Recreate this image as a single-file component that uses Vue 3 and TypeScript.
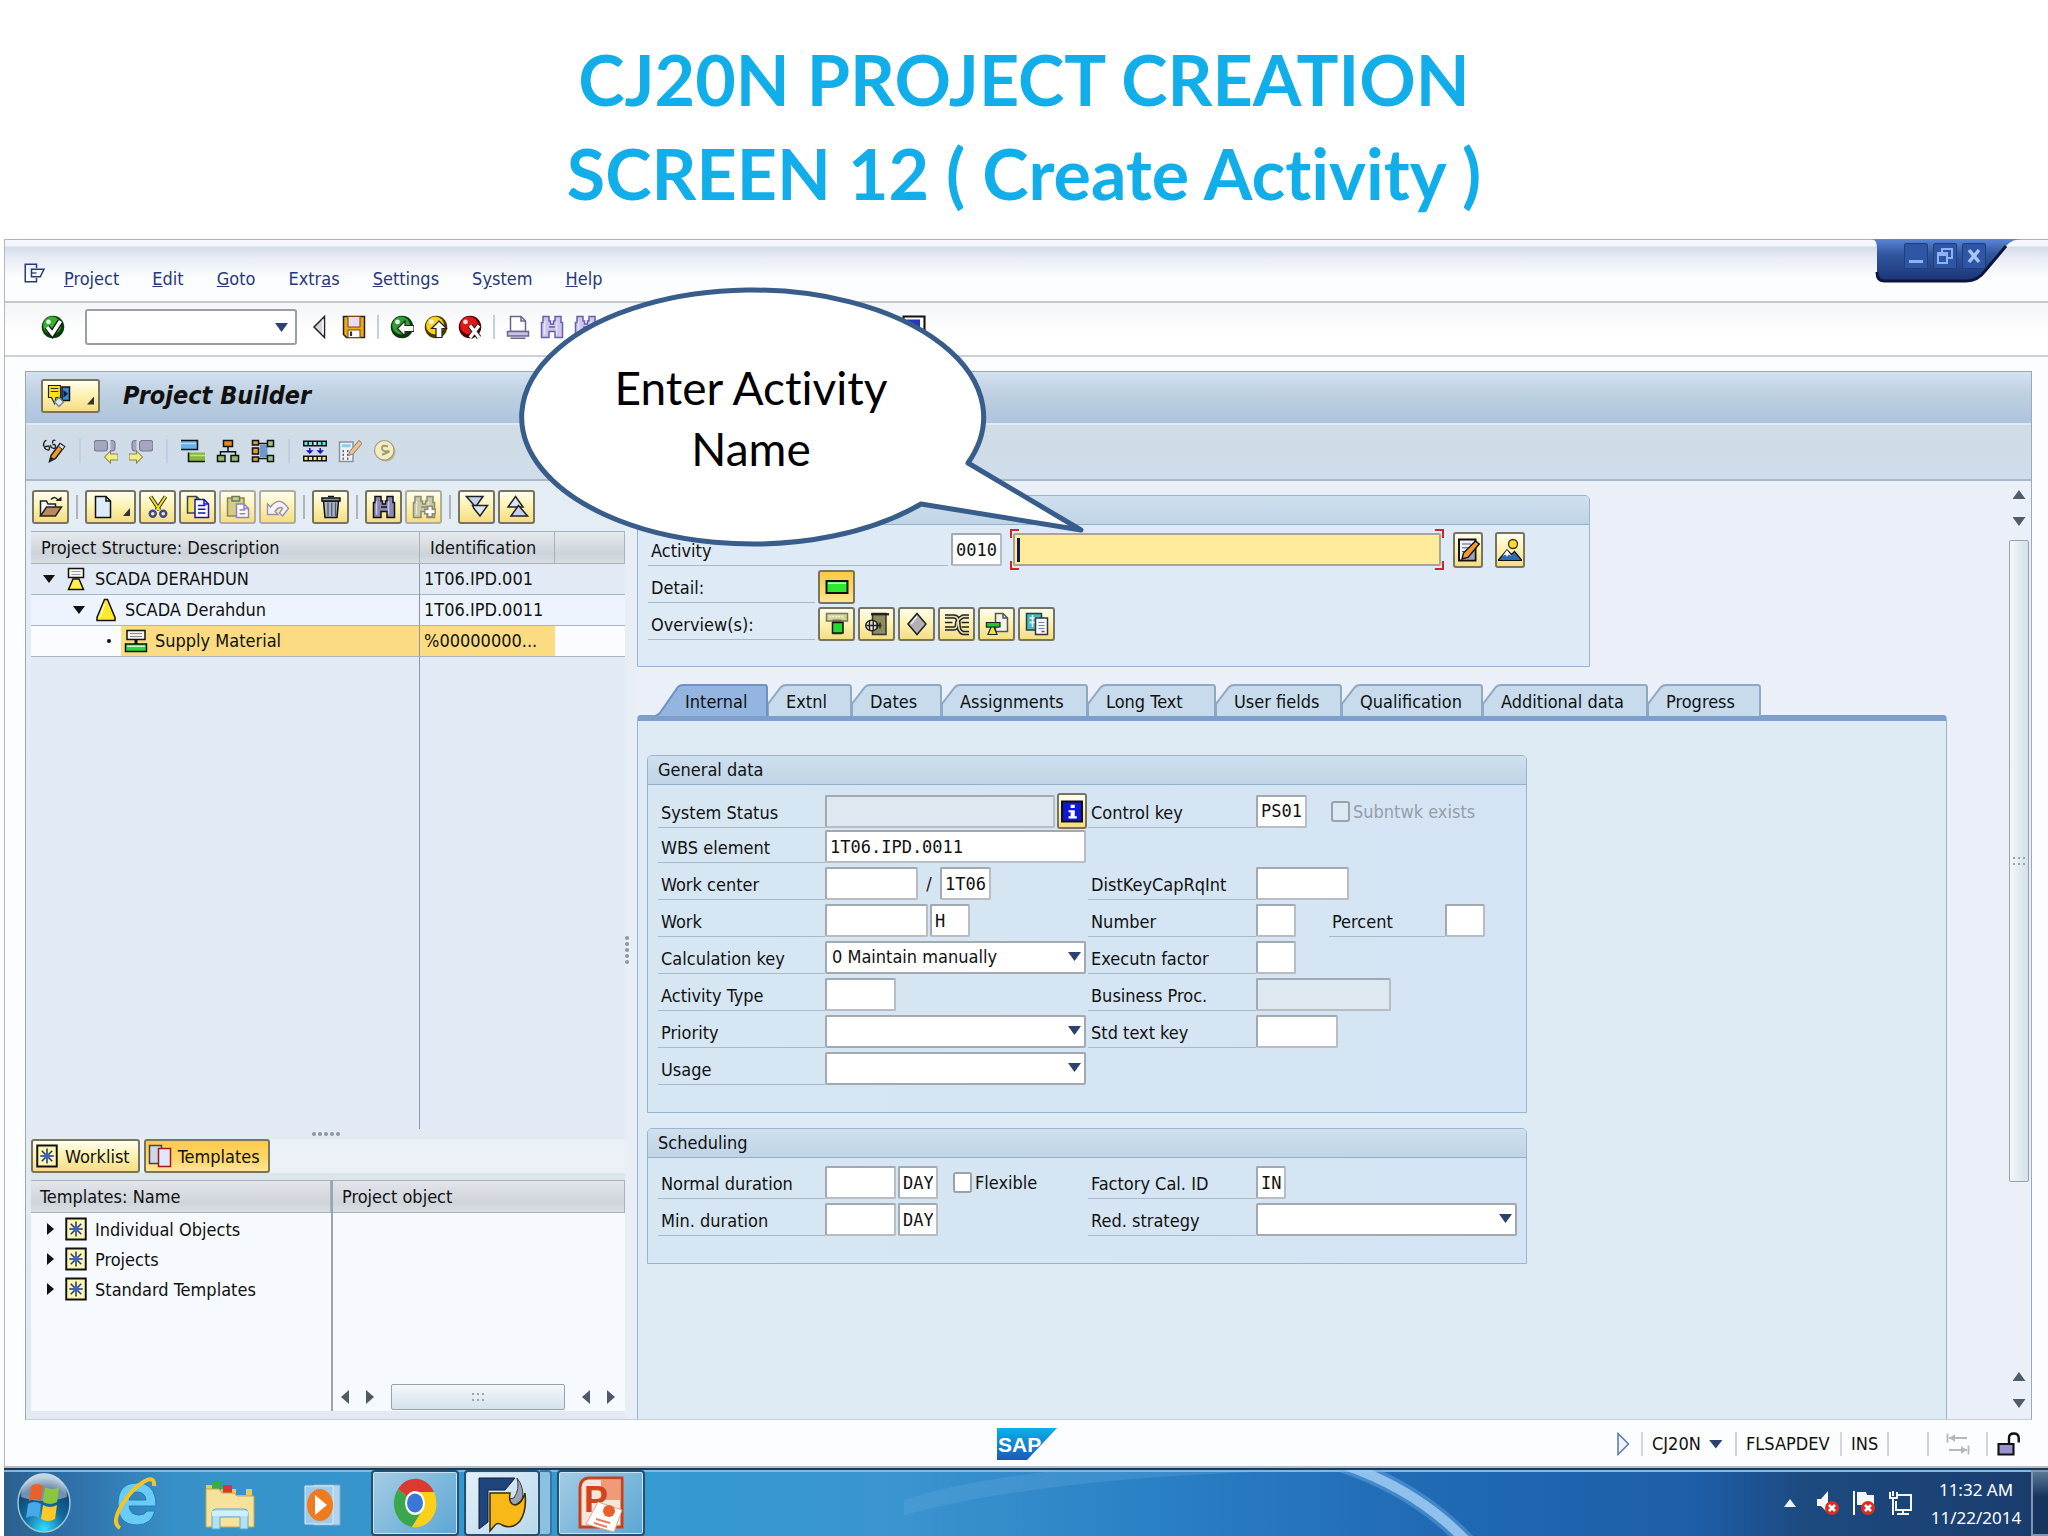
<script setup lang="ts">
type IconName = string

interface Control {
  kind: 'input' | 'select' | 'info' | 'slash' | 'check'
  id: string
  width?: number
  value?: string
  disabled?: boolean
  label?: string
}
interface Cell {
  label?: string
  place: 'a' | 'b' | 'c'
  controls: Control[]
}
interface Group {
  title: string
  rows: Cell[][]
}

const menus = [
  ['', 'P', 'roject'],
  ['', 'E', 'dit'],
  ['', 'G', 'oto'],
  ['Extr', 'a', 's'],
  ['', 'S', 'ettings'],
  ['S', 'y', 'stem'],
  ['', 'H', 'elp'],
]

const binoculars = (fill: string, line: string): string =>
  `<path d="M2 1h4v3h1v2h2V4h1V1h4v4h1v10h-5v-4H6v4H1V5h1z" fill="${fill}" stroke="${line}"/><path d="M3 4v9M11 4v9" stroke="#fff" opacity=".55"/><path d="M6 8h4" stroke="${line}"/>`
const ball = (fill: string, dark: string): string =>
  `<circle cx="8" cy="8" r="7.5" fill="${dark}"/><circle cx="7.4" cy="7" r="6" fill="${fill}"/><circle cx="5" cy="4.6" r="1.6" fill="#fff" opacity=".85"/>`
const doc = (x: number, y: number, w: number, h: number, fill: string, line: string): string =>
  `<path d="M${x} ${y}h${w - 3}l3 3v${h - 3}h-${w}z" fill="${fill}" stroke="${line}"/><path d="M${x + w - 3} ${y}v3h3" fill="none" stroke="${line}"/>`

const icons: Record<IconName, string> = {
  menu: '<path d="M10 4V1H1v14h9v-3M6 5h10l-3 6H6z" fill="none" stroke="#2a3a72" stroke-width="1.2"/><path d="M6 8h4" stroke="#2a3a72"/>',
  enter: ball('#35b02f', '#0b3d0c') + '<path d="M4 8l3.5 4.5L13 4" fill="none" stroke="#111" stroke-width="4"/><path d="M4 8l3.5 4.5L13 4" fill="none" stroke="#fff" stroke-width="2.4"/>',
  back: '<path d="M11 1v14L4 8z" fill="#d4d6da" stroke="#222"/><path d="M10 3v10" stroke="#fff"/>',
  save: '<path d="M1 1h14v14H3l-2-2z" fill="#f0a818" stroke="#222"/><path d="M4 1h8v7H4z" fill="#e6dcf4" stroke="#7a4a10" stroke-width=".7"/><path d="M4 10h8v5H4z" fill="#fff" stroke="#7a4a10" stroke-width=".7"/><path d="M6 11v3" stroke="#333" stroke-width="1.5"/>',
  gback: ball('#2f9e35', '#0a350b') + '<path d="M5 9l5-5v3h6v4h-6v3z" fill="#fff" stroke="#222" stroke-width=".8"/>',
  gexit: ball('#f6d21c', '#4d3a00') + '<path d="M10 4l5 5h-3v6H8V9H5z" fill="#fff" stroke="#222" stroke-width=".8"/>',
  gcancel: ball('#e01818', '#4a0000') + '<path d="M8 7l6 8M14 7l-6 8" stroke="#222" stroke-width="3.600"/><path d="M8 7l6 8M14 7l-6 8" stroke="#fff" stroke-width="2.200"/>',
  print: '<path d="M3 1h7l3 3v7H3z" fill="#fff" stroke="#6a668a"/><path d="M10 1v3h3" fill="none" stroke="#6a668a"/><path d="M1 11h14v3H1z" fill="#c9c3ea" stroke="#6a668a"/><path d="M3 15.500h10" stroke="#6a668a"/>',
  findDim: binoculars('#cdc6f0', '#6a62a0'),
  layout: '<path d="M1 1h14v12H1z" fill="#fff" stroke="#111" stroke-width="1.400"/><path d="M3 3h9v8H3z" fill="#2535c0"/>',
  services: '<path d="M1 1h8v8H6l-1 4-2-4H1z" fill="#ffe11a" stroke="#222" stroke-width=".8"/><path d="M2.500 3h5M2.500 5h5" stroke="#333" stroke-width=".8"/><path d="M10 2h5v9h-5z" fill="#3c86d8" stroke="#111"/><path d="M11 4l3 2.500L11 9z" fill="#06203e"/><path d="M8 9l3 3-3 3-3-3z" fill="#dceaf8" stroke="#789"/>',
  display: '<path d="M5 15l1-4 6-8 3 2-6 8z" fill="#f29a2a" stroke="#222"/><path d="M12 3l3 2-1 2-3-2z" fill="#e6e6e6" stroke="#222" stroke-width=".6"/><path d="M5 15l1-3 2 1z" fill="#222"/><path d="M1 5q0-4 2-4M3 5q2-1 2 1T3 7 2 5zM7 4q2-1 2 1T7 6 6 4M7 3q0-3 2-2" fill="none" stroke="#222" stroke-width=".9"/>',
  prev: '<rect x="0" y="1" width="9" height="7" rx="2" fill="#a5a5bd" stroke="#777790" stroke-width=".7"/><path d="M11 1h1q2 0 2 2v3q0 2-2 2h-1" fill="#a5a5bd" stroke="#777790" stroke-width=".7"/><path d="M7 12l4-4v2h5v4h-5v2z" fill="#f4ec8a" stroke="#8a8440" stroke-width=".7"/>',
  next: '<rect x="7" y="1" width="9" height="7" rx="2" fill="#a5a5bd" stroke="#777790" stroke-width=".7"/><path d="M5 1H4Q2 1 2 3v3q0 2 2 2h1" fill="#a5a5bd" stroke="#777790" stroke-width=".7"/><path d="M9 12L5 8v2H0v4h5v2z" fill="#f4ec8a" stroke="#8a8440" stroke-width=".7"/>',
  gantt: '<path d="M0 1h11v6H0z" fill="#64b4e8"/><path d="M5 9h11v6H5z" fill="#88b83a"/><path d="M0 1h11v6H0M16 15H5V9" fill="none" stroke="#111"/><path d="M0 3h10M6 11h10" stroke="#fff" opacity=".5"/>',
  network: '<path d="M8 5v4M3 11V8.500h10V11" fill="none" stroke="#111"/><path d="M5 1h6v4H5z" fill="#e08a20" stroke="#111"/><path d="M1 11h5v4H1zM10 11h5v4h-5z" fill="#8fbf6a" stroke="#111"/>',
  hierarchy: '<path d="M5 3h7M5 13h7" stroke="#111"/><path d="M6 4h5v8H6z" fill="#6a98c8"/><path d="M1 1h4v3H1zM1 6h4v4H1zM1 12h4v3H1z" fill="#e0a030" stroke="#111"/><path d="M11 1h4v4h-4zM11 11h4v4h-4z" fill="#9ec08a" stroke="#111"/>',
  planning: '<path d="M0 1h16v4H0z" fill="#111"/><path d="M1 2h2v2H1zM4 2h2v2H4z" fill="#6fe0f0"/><path d="M7 2h2v2H7z" fill="#ddd"/><path d="M10 2h2v2h-2zM13 2h2v2h-2z" fill="#6fe0f0"/><path d="M4.500 6v3M11.500 6v3" stroke="#1111c8"/><path d="M2 7.500h5L4.500 10zM9 7.500h5L11.500 10z" fill="#1111c8"/><path d="M0 11h16v4H0z" fill="#111"/><path d="M1 12h2v2H1zM4 12h2v2H4zM7 12h2v2H7zM10 12h2v2h-2zM13 12h2v2h-2z" fill="#f4ec6a"/>',
  costing: '<path d="M1 2h9v13H1z" fill="#eef2f6" stroke="#8a94a0"/><path d="M2.500 3.500h6v2h-6z" fill="#8ed0ea"/><path d="M3 8h1M6 8h1M3 10.500h1M6 10.500h1M3 13h1M6 13h1" stroke="#667" stroke-width="1.500"/><path d="M7 11l1-3 6-7 2 2-6 7z" fill="#eac490" stroke="#9a8a70" stroke-width=".7"/>',
  coin: '<circle cx="8.500" cy="8.500" r="6.500" fill="#b8b490"/><circle cx="7.500" cy="7.500" r="6.500" fill="#f2ecc0" stroke="#a09c78" stroke-width=".8"/><path d="M10 5Q6 3.500 6 6t3.500 2.200T6 10.500" fill="none" stroke="#a09c78" stroke-width="1.300"/>',
  open: '<path d="M1 14V4h4l1 2h5v3" fill="#f6f8ff" stroke="#222"/><path d="M1 14l4-6h10l-4 6z" fill="#b98a58" stroke="#222"/><path d="M8 3q3-3 5 1" fill="none" stroke="#222"/><path d="M11 4h4V1z" fill="#222"/>',
  create: doc(3, 1, 10, 14, '#dcecf8', '#111'),
  cut: '<path d="M3 1l6 9M13 1L7 10" stroke="#222" stroke-width="2.600"/><path d="M3 1l6 9M13 1L7 10" stroke="#f4e020" stroke-width="1.400"/><circle cx="4.500" cy="12.500" r="2" fill="none" stroke="#3a4a9a" stroke-width="1.600"/><circle cx="11.500" cy="12.500" r="2" fill="none" stroke="#3a4a9a" stroke-width="1.600"/>',
  copy: doc(1, 1, 9, 11, '#f0e46a', '#444') + doc(6, 3, 9, 12, '#ffffff', '#1414c8') + '<path d="M8 7h5M8 9.500h5M8 12h5" stroke="#1414c8"/>',
  paste: '<path d="M1 2h11v12H1z" fill="#d6cc84" stroke="#8c865c"/><path d="M4 1h5v3H4z" fill="#c8c8a8" stroke="#6c7a4c"/>' + doc(7, 6, 8, 9, '#ffffff', '#8a80cc') + '<path d="M9 10h4M9 12.500h4" stroke="#8a80cc"/>',
  undo: '<path d="M1 13V6l2 2q6-8 12 1l-4 5-2-2 2-3q-2-2-5 2l2 2z" fill="#f4f2fa" stroke="#968cb4" stroke-width=".9"/>',
  trash: '<path d="M3 4h10l-1 11H4z" fill="#aab4c4" stroke="#111"/><path d="M2 2h12v2H2z" fill="#8a94a4" stroke="#111"/><path d="M6 1h4" stroke="#111"/><path d="M6 5v9M8.500 5v9M11 5v9" stroke="#4a5464" stroke-width=".8"/>',
  find: binoculars('#8a88b4', '#111'),
  findPlus: binoculars('#cac8a8', '#8c8a70') + '<path d="M12 7v8M8 11h8" stroke="#8c8a70" stroke-width="4"/><path d="M12 8v6M9 11h6" stroke="#fff" stroke-width="2"/>',
  expand: '<path d="M1 1h11L7 8z" fill="#c4d4f0" stroke="#222"/><path d="M5 7h10l-5 7-4-5z" fill="#dce6f8" stroke="#222"/>',
  collapse: '<path d="M7 1l5 7H2z" fill="#dce6f8" stroke="#222"/><path d="M9 7l6 7H4z" fill="#c4d4f0" stroke="#222"/>',
  project: '<path d="M3 1h10v6H3z" fill="#f8f8ec" stroke="#111"/><path d="M5 3h6M5 5h6" stroke="#99a" stroke-width=".8"/><path d="M6 8h4l3 7H3z" fill="#fff04a" stroke="#111"/>',
  wbs: '<path d="M7 1h2l5 12v2H2v-2z" fill="#ffe928" stroke="#111"/><path d="M7 4L4 13" stroke="#fffbd0"/>',
  networkHead: '<path d="M2 1h12v6H2z" fill="#f4f4ec" stroke="#111"/><path d="M4 3h8M4 5h8" stroke="#889" stroke-width=".8"/><path d="M8 7v3" stroke="#111" stroke-width="2"/><path d="M1 10h14v5H1z" fill="#2fd63a" stroke="#111"/><path d="M2 11.500h12" stroke="#c4ffc8"/>',
  template: '<path d="M1.500 1h13v14h-13z" fill="#fbf6b0" stroke="#111" stroke-width="1.300"/><path d="M8 3v10M3.500 8h9M4.500 4.500l7 7M11.500 4.500l-7 7" stroke="#23357a"/><circle cx="8" cy="8" r="1.800" fill="#3a62d0"/>',
  templates: '<path d="M1 1h8v12H1z" fill="#cfd6e4" stroke="#444"/><path d="M7 3h8v12H7z" fill="#dfe8fa" stroke="#a01818"/>',
  activity: '<path d="M1 4h14v8H1z" fill="#2ee82e" stroke="#111" stroke-width="1.300"/><path d="M2 5.500h12" stroke="#d0ffd0"/>',
  ovActivity: '<path d="M1 1h14v5H1z" fill="#d4d49c" stroke="#777750"/><path d="M5 5h6v10H5z" fill="#777750"/><path d="M5 7h7v7H5z" fill="#26d830" stroke="#111"/><path d="M3 3h10" stroke="#fff" stroke-dasharray="1 1"/>',
  ovComponent: '<path d="M5 1h9v14H5z" fill="#8c8c60" stroke="#333"/><path d="M4 1.500h12" stroke="#222" stroke-width="1.500"/><ellipse cx="4.500" cy="9" rx="4" ry="3.500" fill="#e4e4d0" stroke="#222"/><path d="M1 9h10M3 6v6M5.500 5.500v7M8 7v4M10 7v4" stroke="#222" stroke-width=".9"/>',
  ovMilestone: '<path d="M8 1l6 7-6 7-6-7z" fill="#b4b0b4" stroke="#222"/><path d="M8 3L4 8" stroke="#eee"/>',
  ovRelation: '<path d="M0 3h6q3 0 3 5t3 6h4M0 11h6q2 0 2-3t4-5h4" fill="none" stroke="#222" stroke-width="3"/><path d="M0 3h6q3 0 3 5t3 6h4M0 11h6q2 0 2-3t4-5h4" fill="none" stroke="#e4e0bc" stroke-width="1"/><path d="M11 7h5M11 10h5M0 7h5" stroke="#222"/>',
  ovPrt: doc(7, 1, 8, 12, '#f2f2e8', '#555') + '<path d="M1 7h8v3H6l2 5H2l2-5H1z" fill="#e8e83a" stroke="#222" stroke-width=".8"/><path d="M1 7h9v3H1z" fill="#24c82c" stroke="#222" stroke-width=".8"/>',
  ovDocs: '<path d="M1 1h10v11H1z" fill="#58b4b4" stroke="#124848"/><path d="M3 4h6M3 7h6M5 2v8" stroke="#e0ffff"/><path d="M7 4h8v11H7z" fill="#f6f8ff" stroke="#334"/><path d="M9 7h4M9 9h4M9 11h4" stroke="#6a86b8" stroke-width=".8"/><path d="M11 13h2" stroke="#d02020"/>',
  editText: '<path d="M2 1h11v14H2z" fill="#eef2fa" stroke="#111" stroke-width="1.300"/><path d="M4 4h6M4 6.500h5M4 9h3" stroke="#557" stroke-width=".8"/><path d="M9 9h3v5H7z" fill="#9aa0c8"/><path d="M4 14l1-4 8-8 2.500 2L8 13z" fill="#f29a2a" stroke="#111" stroke-width=".9"/>',
  picture: '<circle cx="10" cy="4" r="3" fill="#ffdc20" stroke="#333" stroke-width=".9"/><path d="M0 15l6-7 3 3 2-2 5 6z" fill="#2c6cb4" stroke="#111" stroke-width=".8"/><path d="M6 8l3 4-2-1-1 1.500L5 11l-2 1z" fill="#fff"/>',
  info: '<path d="M0 0h16v16H0z" fill="#111"/><path d="M1.500 1.500h13v13h-13z" fill="#1018d8"/><path d="M7 3h3v2.500H7zM5.500 7H10v4.500h1.500V13h-6v-1.500H7V8.500H5.500z" fill="#fff"/>',
  ready: '<path d="M4 1l7 7-7 7z" fill="#eef4fc" stroke="#5a78a8"/>',
  swap: '<path d="M1 1v6M15 9v6M2 4h12M2 12h12" stroke="#b4b8bc" stroke-width="1.200"/><path d="M2 4l4-2.500v5zM14 12l-4-2.500v5z" fill="#b4b8bc"/>',
  lock: '<path d="M1 8h10v7H1z" fill="#9a92cc" stroke="#111" stroke-width="1.400"/><path d="M8 8V4q0-3 3.200-3T14.500 4v3" fill="none" stroke="#111" stroke-width="1.600"/>',
}

const stdLeft: IconName[][] = [
  ['back', 'save'],
  ['gback', 'gexit', 'gcancel'],
  ['print', 'findDim', 'findDim'],
]
const appTools: IconName[][] = [
  ['display'],
  ['prev', 'next'],
  ['gantt', 'network', 'hierarchy'],
  ['planning', 'costing', 'coin'],
]
const treeTools: { icon: IconName; drop?: boolean; off?: boolean }[][] = [
  [{ icon: 'open' }],
  [
    { icon: 'create', drop: true },
    { icon: 'cut' },
    { icon: 'copy' },
    { icon: 'paste', off: true },
    { icon: 'undo', off: true },
  ],
  [{ icon: 'trash' }],
  [{ icon: 'find' }, { icon: 'findPlus', off: true }],
  [{ icon: 'expand' }, { icon: 'collapse' }],
]
const treeRows: { icon: IconName; text: string; ident: string; level: number }[] = [
  { icon: 'project', text: 'SCADA DERAHDUN', ident: '1T06.IPD.001', level: 0 },
  { icon: 'wbs', text: 'SCADA Derahdun', ident: '1T06.IPD.0011', level: 1 },
  { icon: 'networkHead', text: 'Supply Material', ident: '%00000000...', level: 2 },
]
const templates = ['Individual Objects', 'Projects', 'Standard Templates']
const overviews: IconName[] = ['ovActivity', 'ovComponent', 'ovMilestone', 'ovRelation', 'ovPrt', 'ovDocs']
const tabs = [
  { text: 'Internal', width: 113 },
  { text: 'Extnl', width: 84 },
  { text: 'Dates', width: 90 },
  { text: 'Assignments', width: 146 },
  { text: 'Long Text', width: 128 },
  { text: 'User fields', width: 126 },
  { text: 'Qualification', width: 141 },
  { text: 'Additional data', width: 165 },
  { text: 'Progress', width: 113 },
]

const inp = (id: string, width: number, value = '', disabled = false): Control => ({ kind: 'input', id, width, value, disabled })
const sel = (id: string, value = ''): Control => ({ kind: 'select', id, width: 261, value })

const groups: Group[] = [
  {
    title: 'General data',
    rows: [
      [
        { label: 'System Status', place: 'a', controls: [inp('status', 230, '', true), { kind: 'info', id: 'info' }] },
        { label: 'Control key', place: 'b', controls: [inp('ctrl', 51, 'PS01')] },
        { place: 'c', controls: [{ kind: 'check', id: 'subnet', label: 'Subntwk exists', disabled: true }] },
      ],
      [{ label: 'WBS element', place: 'a', controls: [inp('wbs', 261, '1T06.IPD.0011')] }],
      [
        { label: 'Work center', place: 'a', controls: [inp('wc', 93), { kind: 'slash', id: 'sl' }, inp('plant', 51, '1T06')] },
        { label: 'DistKeyCapRqInt', place: 'b', controls: [inp('dist', 93)] },
      ],
      [
        { label: 'Work', place: 'a', controls: [inp('work', 103), inp('unit', 40, 'H')] },
        { label: 'Number', place: 'b', controls: [inp('num', 40)] },
        { label: 'Percent', place: 'c', controls: [inp('pct', 40)] },
      ],
      [
        { label: 'Calculation key', place: 'a', controls: [sel('calc', '0 Maintain manually')] },
        { label: 'Executn factor', place: 'b', controls: [inp('exec', 40)] },
      ],
      [
        { label: 'Activity Type', place: 'a', controls: [inp('atype', 71)] },
        { label: 'Business Proc.', place: 'b', controls: [inp('bproc', 135, '', true)] },
      ],
      [
        { label: 'Priority', place: 'a', controls: [sel('prio')] },
        { label: 'Std text key', place: 'b', controls: [inp('std', 82)] },
      ],
      [{ label: 'Usage', place: 'a', controls: [sel('usage')] }],
    ],
  },
  {
    title: 'Scheduling',
    rows: [
      [
        {
          label: 'Normal duration',
          place: 'a',
          controls: [inp('ndur', 71), inp('nday', 40, 'DAY'), { kind: 'check', id: 'flex', label: 'Flexible' }],
        },
        { label: 'Factory Cal. ID', place: 'b', controls: [inp('fcal', 30, 'IN')] },
      ],
      [
        { label: 'Min. duration', place: 'a', controls: [inp('mdur', 71), inp('mday', 40, 'DAY')] },
        { label: 'Red. strategy', place: 'b', controls: [sel('red')] },
      ],
    ],
  },
]
</script>

<template>
  <div class="slide">
    <h1>CJ20N PROJECT CREATION<br />SCREEN 12 ( Create Activity )</h1>

    <main class="window">
      <div class="winbuttons">
        <svg class="winshape" viewBox="0 0 156 46" aria-hidden="true">
          <defs>
            <linearGradient id="wg" x1="0" y1="0" x2="0" y2="1">
              <stop offset="0" stop-color="#5b86d8" />
              <stop offset=".35" stop-color="#33579f" />
              <stop offset="1" stop-color="#1c3478" />
            </linearGradient>
          </defs>
          <path d="M0 1Q5 2 5 10V36Q5 43 12 43H94Q106 43 113 33L134 8Q140 1 150 1Z" fill="url(#wg)" />
          <path d="M5 34Q5 43 12 43H94Q106 43 113 33L134 8" fill="none" stroke="#0c163c" stroke-width="3" />
        </svg>
        <div class="winrow">
          <button type="button" aria-label="Minimize"><svg viewBox="0 0 16 16"><path d="M1 12h14v3H1z" fill="#8fb2f4" /></svg></button>
          <button type="button" aria-label="Restore"><svg viewBox="0 0 16 16"><path d="M5 5V1h10v9h-4M1 5h9v10H1zM1 7h9" fill="none" stroke="#8fb2f4" stroke-width="2" /></svg></button>
          <button type="button" aria-label="Close"><svg viewBox="0 0 16 16"><path d="M3 2l10 12M13 2L3 14" stroke="#a8c4fa" stroke-width="3.500" /></svg></button>
        </div>
      </div>

      <nav class="menubar">
        <svg class="icon" viewBox="0 0 16 16" v-html="icons.menu"></svg>
        <a v-for="m in menus" :key="m[2]" href="#">{{ m[0] }}<u>{{ m[1] }}</u>{{ m[2] }}</a>
      </nav>

      <div class="stdbar">
        <button class="flat" type="button" aria-label="Enter"><svg class="icon" viewBox="0 0 16 16" v-html="icons.enter"></svg></button>
        <span class="pick command">
          <input aria-label="Command" type="text" />
        </span>
        <template v-for="(g, gi) in stdLeft" :key="gi">
          <i v-if="gi" class="sep"></i>
          <button v-for="(n, i) in g" :key="i" class="flat" type="button" :aria-label="n"><svg class="icon" viewBox="0 0 16 16" v-html="icons[n]"></svg></button>
        </template>
        <span class="gap"></span>
        <button class="flat" type="button" aria-label="layout"><svg class="icon" viewBox="0 0 16 16" v-html="icons.layout"></svg></button>
      </div>

      <section class="app">
        <header class="apptitle">
          <button class="gold services" type="button" aria-label="Services">
            <svg class="icon" viewBox="0 0 16 16" v-html="icons.services"></svg>
            <i class="corner"></i>
          </button>
          <h2>Project Builder</h2>
        </header>
        <div class="appbar">
          <template v-for="(g, gi) in appTools" :key="gi">
            <i v-if="gi" class="sep"></i>
            <button v-for="n in g" :key="n" class="flat" type="button" :aria-label="n"><svg class="icon" viewBox="0 0 16 16" v-html="icons[n]"></svg></button>
          </template>
        </div>

        <div class="work">
          <aside class="left">
            <div class="treetools">
              <template v-for="(g, gi) in treeTools" :key="gi">
                <i v-if="gi" class="sep"></i>
                <button v-for="b in g" :key="b.icon" class="gold" :class="{ wide: b.drop, off: b.off }" type="button" :aria-label="b.icon">
                  <svg class="icon" viewBox="0 0 16 16" v-html="icons[b.icon]"></svg>
                  <i v-if="b.drop" class="corner"></i>
                </button>
              </template>
            </div>
            <table class="tree">
              <thead>
                <tr><th class="c1">Project Structure: Description</th><th class="c2">Identification</th><th></th></tr>
              </thead>
              <tbody>
                <tr v-for="r in treeRows" :key="r.text" :class="'lv' + r.level">
                  <td>
                    <div class="node">
                      <i :class="r.level < 2 ? 'down' : 'dot'"></i>
                      <span class="nodetext"><svg class="icon" viewBox="0 0 16 16" v-html="icons[r.icon]"></svg>{{ r.text }}</span>
                    </div>
                  </td>
                  <td class="ident">{{ r.ident }}</td>
                  <td></td>
                </tr>
                <tr class="rest"><td></td><td></td><td></td></tr>
              </tbody>
            </table>
            <div class="hsplit"><i v-for="n in 5" :key="n"></i></div>
            <div class="switch">
              <button class="gold" type="button"><svg class="icon" viewBox="0 0 16 16" v-html="icons.template"></svg>Worklist</button>
              <button class="gold on" type="button"><svg class="icon" viewBox="0 0 16 16" v-html="icons.templates"></svg>Templates</button>
            </div>
            <div class="lists">
              <div class="list1">
                <div class="lhead">Templates: Name</div>
                <ul>
                  <li v-for="t in templates" :key="t"><i class="right"></i><svg class="icon" viewBox="0 0 16 16" v-html="icons.template"></svg>{{ t }}</li>
                </ul>
              </div>
              <div class="list2">
                <div class="lhead">Project object</div>
                <div class="hscroll">
                  <i class="la"></i><i class="ra"></i><span class="hthumb"><b v-for="n in 6" :key="n"></b></span><i class="la"></i><i class="ra"></i>
                </div>
              </div>
            </div>
          </aside>

          <div class="vsplit"><i v-for="n in 5" :key="n"></i></div>

          <div class="right-pane">
            <section class="group ident-group">
              <div class="ghead"></div>
              <div class="gbody">
                <div class="line">
                  <label class="lab long" for="act">Activity</label>
                  <input id="act" class="fld w51" type="text" value="0010" />
                  <span class="focus"><input aria-label="Activity name" type="text" /><i class="caret"></i></span>
                  <button class="gold tall" type="button" aria-label="Long text"><svg class="icon" viewBox="0 0 16 16" v-html="icons.editText"></svg></button>
                  <button class="gold tall" type="button" aria-label="Picture"><svg class="icon" viewBox="0 0 16 16" v-html="icons.picture"></svg></button>
                </div>
                <div class="line">
                  <span class="lab">Detail:</span>
                  <button class="gold on" type="button" aria-label="Detail"><svg class="icon" viewBox="0 0 16 16" v-html="icons.activity"></svg></button>
                </div>
                <div class="line">
                  <span class="lab">Overview(s):</span>
                  <button v-for="n in overviews" :key="n" class="gold" type="button" :aria-label="n"><svg class="icon" viewBox="0 0 16 16" v-html="icons[n]"></svg></button>
                </div>
              </div>
            </section>

            <div class="tabs" role="tablist">
              <button v-for="(t, i) in tabs" :key="t.text" role="tab" type="button" class="tab" :class="{ active: !i }" :style="{ width: t.width + 'px' }">
                <svg :viewBox="`0 0 ${t.width} 32`" aria-hidden="true">
                  <path v-if="!i" :d="`M0 32Q4 31 7 26L23 3Q25 1 28 1H${t.width - 3}Q${t.width - 1} 1 ${t.width - 1} 4V32`" fill="#93b5df" stroke="#6f92be" stroke-width="2" />
                  <path v-else :d="`M0 32V20L13 3Q15 1 18 1H${t.width - 3}Q${t.width - 1} 1 ${t.width - 1} 4V32`" fill="#c8dbed" stroke="#8fa9c4" stroke-width="2" />
                </svg>
                <span>{{ t.text }}</span>
              </button>
            </div>

            <div class="tabpanel">
              <section v-for="g in groups" :key="g.title" class="group form">
                <h3 class="ghead">{{ g.title }}</h3>
                <div class="gbody">
                  <div v-for="(row, ri) in g.rows" :key="ri" class="frow">
                    <div v-for="c in row" :key="c.place" class="cell" :class="'cell-' + c.place">
                      <label v-if="c.label" class="lab" :for="c.controls[0].id">{{ c.label }}</label>
                      <template v-for="k in c.controls" :key="k.id">
                        <input v-if="k.kind === 'input'" :id="k.id" class="fld" type="text" :value="k.value" :disabled="k.disabled" :style="{ width: k.width + 'px' }" />
                        <span v-else-if="k.kind === 'select'" class="pick" :style="{ width: k.width + 'px' }">
                          <select :id="k.id"><option>{{ k.value }}</option></select>
                        </span>
                        <button v-else-if="k.kind === 'info'" class="gold tall info" type="button" aria-label="Info"><svg class="icon" viewBox="0 0 16 16" v-html="icons.info"></svg></button>
                        <span v-else-if="k.kind === 'slash'" class="slash">/</span>
                        <label v-else class="check" :class="{ dim: k.disabled }"><input type="checkbox" :disabled="k.disabled" />{{ k.label }}</label>
                      </template>
                    </div>
                  </div>
                </div>
              </section>
            </div>
          </div>

          <div class="vscroll">
            <i class="up"></i><i class="dn"></i>
            <span class="vthumb"><b v-for="n in 6" :key="n"></b></span>
            <i class="up"></i><i class="dn"></i>
          </div>
        </div>
      </section>

      <footer class="status">
        <svg class="sap" viewBox="0 0 60 32" aria-label="SAP">
          <defs>
            <linearGradient id="sg" x1="0" y1="0" x2="0" y2="1">
              <stop offset="0" stop-color="#08b2ea" />
              <stop offset="1" stop-color="#1c58b8" />
            </linearGradient>
          </defs>
          <path d="M0 0h60L30 32H0z" fill="url(#sg)" />
          <text x="1" y="24" class="saptext">SAP</text>
        </svg>
        <div class="statusright">
          <svg class="icon" viewBox="0 0 16 16" v-html="icons.ready"></svg>
          <i class="sep"></i>
          <span class="s1">CJ20N<i class="navy"></i></span>
          <i class="sep"></i>
          <span class="s2">FLSAPDEV</span>
          <i class="sep"></i>
          <span class="s3">INS</span>
          <i class="sep"></i>
          <span class="s4"></span>
          <i class="sep"></i>
          <span class="s5"><svg class="icon" viewBox="0 0 16 16" v-html="icons.swap"></svg></span>
          <i class="sep"></i>
          <span class="s6"><svg class="icon" viewBox="0 0 16 16" v-html="icons.lock"></svg></span>
        </div>
      </footer>

      <div class="callout">
        <svg viewBox="0 0 580 270" aria-hidden="true">
          <path d="M449 184A231 127 0 1 0 402 225L562 251Z" fill="#fff" stroke="#385d8a" stroke-width="5" stroke-linejoin="round" />
        </svg>
        <p>Enter Activity<br />Name</p>
      </div>
    </main>

    <div class="taskbar">
      <svg class="swoosh" viewBox="0 0 640 66" aria-hidden="true">
        <path d="M0 45Q150 5 420 0H160Q60 10 0 30z" fill="#6ab0e0" opacity=".25" />
        <path d="M438 -6Q515 20 565 74" fill="none" stroke="#6aa8e4" stroke-width="17" opacity=".45" />
        <path d="M438 -6Q515 20 565 74" fill="none" stroke="#a4cef4" stroke-width="10" opacity=".8" />
      </svg>
      <button class="task orb" type="button" aria-label="Start">
        <svg viewBox="0 0 56 60">
          <defs>
            <radialGradient id="og" cx=".5" cy=".95" r=".9">
              <stop offset="0" stop-color="#2fe0ff" />
              <stop offset=".45" stop-color="#14689c" />
              <stop offset=".8" stop-color="#0f4674" />
              <stop offset="1" stop-color="#9cb8cc" />
            </radialGradient>
          </defs>
          <ellipse cx="28" cy="30" rx="26" ry="29" fill="url(#og)" stroke="#9cc4dc" stroke-width="1.500" />
          <path d="M5 24A23 24 0 0 1 51 24Q28 32 5 24z" fill="#fff" opacity=".4" />
          <path d="M15 13Q21 9 27 13L25 28Q19 24 13 28z" fill="#e8602c" />
          <path d="M29 14Q36 18 43 14L41 29Q34 33 27 29z" fill="#8cc63e" />
          <path d="M12 31Q18 27 25 31L23 45Q17 41 10 45z" fill="#48a8e8" />
          <path d="M27 32Q34 36 41 32L39 46Q32 50 25 46z" fill="#fcc828" />
        </svg>
      </button>
      <button class="task" type="button" aria-label="Internet Explorer">
        <svg viewBox="0 0 56 60">
          <path d="M29 10q19 0 19 23H21q1 9 10 9 6 0 8-4h8q-4 14-18 14-19 0-19-21 0-21 19-21zM21 27h17q-1-8-9-8-7 0-8 8z" fill="#6accf4" stroke="#1a7cc0" />
          <path d="M12 55Q3 50 14 32 24 15 37 8q10-5 9 5" fill="none" stroke="#f4c424" stroke-width="4" />
        </svg>
      </button>
      <button class="task" type="button" aria-label="Explorer">
        <svg viewBox="0 0 56 60">
          <path d="M4 12h12l3 4h31v36H4z" fill="#e8c860" />
          <path d="M10 9h9v8h-9z" fill="#35b03a" /><path d="M21 12h9v8h-9z" fill="#d03a2a" /><path d="M34 15h10v7H34z" fill="#3a90d8" />
          <path d="M4 16h13l3 4h12l3 3h17v31H4z" fill="#f6e29a" stroke="#c8a44a" />
          <path d="M10 56V40q0-4 4-4h28q4 0 4 4v16h-8V44H18v12z" fill="#b4e0f4" stroke="#5aa8d0" />
          <path d="M10 38h36v5H10z" fill="#d8f2fc" opacity=".8" />
        </svg>
      </button>
      <button class="task" type="button" aria-label="Media Player">
        <svg viewBox="0 0 56 60">
          <path d="M18 12h26v40H18z" fill="#b4d4ec" stroke="#7eaed0" /><path d="M9 13h28v38H9z" fill="#a0cae8" stroke="#d8ecf8" />
          <ellipse cx="24" cy="32" rx="13" ry="16" fill="#f07a1c" /><path d="M19 22v20l12-10z" fill="#fff" />
        </svg>
      </button>
      <button class="task box w88" type="button" aria-label="Chrome">
        <svg viewBox="0 0 56 60">
          <path d="M28 30L11 16A21 24 0 0 1 47 19H28z" fill="#dc3a30" />
          <path d="M28 30L11 16A21 24 0 0 0 25 54L35 38z" fill="#3ba74c" />
          <path d="M28 19H47A21 24 0 0 1 25 54L36 36z" fill="#fcd018" />
          <ellipse cx="28" cy="30" rx="10" ry="12" fill="#fff" /><ellipse cx="28" cy="30" rx="8" ry="9.500" fill="#3a78d8" />
        </svg>
      </button>
      <button class="task box bright" type="button" aria-label="SAP Logon">
        <svg viewBox="0 0 56 60">
          <path d="M5 5h36L31 17H14v32l-9 7z" fill="#20447c" stroke="#0c1c38" />
          <path d="M43 5q8 10 5 22l-7 5q-5 1-6-6l5-1q6-9 3-20z" fill="#9aa4b4" stroke="#39404c" />
          <path d="M16 20h20q-2 12 6 12 6-2 9-12 2 18-5 28-8 9-18 4-4-3-7 0l-5 6z" fill="#f8b818" stroke="#3a2a08" stroke-width="1.500" />
        </svg>
      </button>
      <i class="stack"></i>
      <button class="task box w88" type="button" aria-label="PowerPoint">
        <svg viewBox="0 0 56 60">
          <path d="M15 5h34v49H7V14q1-8 8-9z" fill="#fbe4da" stroke="#c8401c" stroke-width="3" />
          <path d="M28 7h19v20H28z" fill="#f09a78" />
          <text x="11" y="39" class="ppt">P</text>
          <path d="M25 29l24 8-8 22-28-8z" fill="#fff" stroke="#e0a890" /><circle cx="36" cy="38" r="6" fill="#e8602c" /><path d="M23 46l14 4M21 50l13 4" stroke="#e8805c" stroke-width="2" />
        </svg>
      </button>
      <div class="tray">
        <i class="trayup"></i>
        <svg viewBox="0 0 24 26"><path d="M1 9h4l7-8v22l-7-7H1z" fill="#f4f6fa" /><circle cx="16" cy="18" r="7" fill="#d83020" /><path d="M13 15l6 6M19 15l-6 6" stroke="#fff" stroke-width="2.500" /></svg>
        <svg viewBox="0 0 24 26"><path d="M2 1v24" stroke="#fff" stroke-width="2" /><path d="M5 2h9l1 3h7v10H5z" fill="#f4f6fa" /><circle cx="16" cy="18" r="7" fill="#d83020" /><path d="M13 15l6 6M19 15l-6 6" stroke="#fff" stroke-width="2.500" /></svg>
        <svg viewBox="0 0 24 26"><path d="M10 5h13v15H8v-9M9 24h12M15 20v4M2 2v6h7V2M5 8v17M5 1v5" fill="none" stroke="#f4f6fa" stroke-width="2" /></svg>
        <time>11:32 AM<br />11/22/2014</time>
      </div>
      <i class="desk"></i>
    </div>
  </div>
</template>

<style>
body {
  background: #fff;
}
</style>

<style scoped>
* {
  box-sizing: border-box;
}
.slide {
  display: flex;
  flex-direction: column;
  min-height: 100vh;
  font-family: "DejaVu Sans Condensed", "Noto Sans", sans-serif;
  font-size: 18px;
  color: #111;
}
button,
input,
select {
  font: inherit;
  color: inherit;
  margin: 0;
  padding: 0;
}
i {
  display: block;
  flex: none;
}
h1 {
  margin: 0;
  padding: 32px 0 19px;
  font: bold 70px/94px Lato, "Noto Sans", sans-serif;
  font-variant-ligatures: none;
  color: #12aeea;
  text-align: center;
}
.icon {
  display: block;
  width: 24px;
  height: 26px;
  flex: none;
}

.window {
  position: relative;
  flex: 1;
  display: flex;
  flex-direction: column;
  margin-left: 4px;
  border-left: 1px solid #b4b8be;
  background: #fcfdff;
}
.winbuttons {
  position: absolute;
  top: -1px;
  right: 20px;
  width: 156px;
}
.winshape {
  display: block;
  width: 156px;
}
.winrow {
  position: absolute;
  left: 32px;
  top: 5px;
  display: flex;
  gap: 5px;
}
.winrow button {
  width: 24px;
  height: 26px;
  border: 1px solid #20407c;
  border-radius: 2px;
  background: #2f56a4;
  display: grid;
  place-items: center;
}
.winrow svg {
  width: 16px;
  height: 16px;
}
.menubar {
  display: flex;
  align-items: center;
  gap: 33px;
  height: 64px;
  padding: 16px 0 0 17px;
  border-top: 1px solid #a8b4c8;
  border-bottom: 2px solid #c4c8ce;
  background: linear-gradient(#f4f6fc 6px, #d4dceb 7px, #e8ecf5 18px, #fcfdff 38px);
}
.menubar .icon {
  height: 20px;
  margin: -12px -15px 0 0;
}
.menubar a {
  color: #27387a;
  text-decoration: none;
}
.stdbar {
  display: flex;
  align-items: center;
  height: 54px;
  padding: 0 0 4px 31px;
  border-bottom: 2px solid #cdd0d8;
  background: linear-gradient(#f4f5f8, #fff 30px);
}
.flat {
  border: 0;
  background: none;
  width: 34px;
  height: 28px;
  display: grid;
  place-items: center;
}
.stdbar .command {
  width: 212px;
  margin: 0 6px 0 15px;
}
.command input {
  width: 100%;
  height: 36px;
  border: 2px solid #9a9ea6;
  border-radius: 3px;
  background: #fff;
  padding: 0 8px;
}
.sep {
  width: 2px;
  height: 24px;
  margin: 0 7px;
  background: #c0cfe2;
}
.stdbar .sep {
  margin: 0 6px;
}
.gap {
  width: 294px;
}

.app {
  flex: 1;
  display: flex;
  flex-direction: column;
  margin: 14px 16px 0 20px;
  border: 1px solid #9aa8b8;
  border-bottom-color: #c8ced6;
}
.apptitle {
  display: flex;
  align-items: center;
  gap: 23px;
  height: 53px;
  padding: 0 0 4px 15px;
  background: linear-gradient(#d4e1f0, #bfd1e2 40%, #adc4dc);
  border-bottom: 2px solid #dcebf6;
}
h2 {
  margin: 0;
  font: italic bold 25px/30px "DejaVu Sans Condensed", "Noto Sans", sans-serif;
}
.gold {
  position: relative;
  display: flex;
  align-items: center;
  justify-content: center;
  flex: none;
  width: 37px;
  height: 34px;
  border: 2px solid #77745f;
  border-radius: 3px;
  background: linear-gradient(#fffdf0, #fdf1ae 50%, #f4dd84);
}
.gold.services {
  width: 59px;
  justify-content: flex-start;
  padding-left: 4px;
}
.gold.wide {
  width: 51px;
  justify-content: flex-start;
  padding-left: 4px;
}
.gold.off {
  border-color: #b0ad9a;
}
.gold.on {
  background: linear-gradient(#fbca4c, #ffd76a 60%, #ffe596);
}
.gold.tall {
  width: 30px;
  height: 36px;
}
.corner {
  position: absolute;
  right: 4px;
  bottom: 6px;
  width: 7px;
  height: 8px;
  background: #333;
  clip-path: polygon(100% 0, 100% 100%, 0 100%);
}
.appbar {
  display: flex;
  align-items: center;
  gap: 1px;
  height: 56px;
  padding: 0 0 2px 11px;
  background: linear-gradient(#d0dde6, #cfdceb);
  border-bottom: 2px solid #a9b8c8;
}

.work {
  flex: 1;
  display: flex;
  background: #ebf0f8;
}
.left {
  width: 599px;
  display: flex;
  flex-direction: column;
  padding: 9px 0 8px 5px;
  background: linear-gradient(#e4ecf4, #e2e9f2);
}
.treetools {
  display: flex;
  align-items: center;
  gap: 3px;
  height: 34px;
  margin: 0 0 7px 1px;
}
.treetools .sep {
  background: #aeb4bc;
  margin: 0 4px;
}
.tree {
  flex: 1;
  display: flex;
  flex-direction: column;
  border-collapse: collapse;
  background: #e1eaf5;
}
.tree thead,
.tree tbody {
  display: flex;
  flex-direction: column;
}
.tree tbody {
  flex: 1;
}
.tree tr {
  display: grid;
  grid-template-columns: 389px 135px 1fr;
}
.tree th {
  height: 33px;
  padding: 0 10px;
  font-weight: normal;
  line-height: 32px;
  text-align: left;
  border: 1px solid #a9b2bc;
  border-left: 0;
  background: linear-gradient(#e6eaee, #ccd3da 70%, #d8dde2);
  white-space: nowrap;
}
.tree td {
  padding: 0;
  border-bottom: 1px solid #a6b6c8;
}
.tree td:first-child {
  border-right: 1px solid #8c98a8;
}
.tree tr.rest {
  flex: 1;
}
.tree tr.rest td {
  border-bottom: 0;
}
.lv1 {
  background: #eef4fd;
}
.lv2 {
  background: #fafcff;
}
.node {
  display: flex;
  align-items: center;
  height: 30px;
  padding-left: 12px;
}
.lv1 .node {
  padding-left: 42px;
}
.lv2 .node {
  padding-left: 72px;
}
.nodetext {
  flex: 1;
  display: flex;
  align-items: center;
  gap: 7px;
  height: 30px;
  padding-left: 3px;
  margin-left: 6px;
  line-height: 30px;
}
.ident {
  padding-left: 4px !important;
  line-height: 30px;
}
.lv2 .nodetext,
.lv2 .ident {
  background: #fbdc82;
}
.down,
.right,
.dot {
  width: 12px;
  height: 8px;
  background: #111;
  clip-path: polygon(0 0, 100% 0, 50% 100%);
}
.dot {
  clip-path: circle(2px at 50% 50%);
}
.right {
  width: 7px;
  height: 12px;
  clip-path: polygon(0 0, 100% 50%, 0 100%);
}
.hsplit {
  display: flex;
  justify-content: center;
  align-items: center;
  gap: 2px;
  height: 10px;
  padding-right: 4px;
}
.hsplit i,
.vsplit i {
  width: 4px;
  height: 4px;
  background: #8c96a2;
  clip-path: circle(2px);
}
.switch {
  display: flex;
  gap: 4px;
  height: 41px;
  background: #ecf1f8;
  border-bottom: 7px solid #dde5ec;
}
.switch .gold {
  width: auto;
  height: 34px;
  gap: 6px;
  padding: 0 8px 0 2px;
}
.lists {
  display: flex;
  height: 231px;
  background: #f6f9fe;
}
.list1 {
  width: 302px;
  border-right: 2px solid #98a4b0;
}
.list2 {
  flex: 1;
  display: flex;
  flex-direction: column;
  justify-content: space-between;
}
.lhead {
  height: 33px;
  padding-left: 9px;
  line-height: 32px;
  border: 1px solid #a9b2bc;
  border-left: 0;
  background: linear-gradient(#e2e5ea, #cfd4db 70%, #dadfe4);
}
.lists ul {
  margin: 0;
  padding: 1px 0 0 16px;
  list-style: none;
}
.lists li {
  display: flex;
  align-items: center;
  height: 30px;
  gap: 7px;
}
.lists li .icon {
  margin-left: 3px;
}
.hscroll {
  display: flex;
  align-items: center;
  gap: 17px;
  height: 28px;
  padding: 0 10px 0 8px;
}
.la,
.ra {
  width: 8px;
  height: 14px;
  background: #4e5a66;
  clip-path: polygon(100% 0, 100% 100%, 0 50%);
}
.ra {
  clip-path: polygon(0 0, 100% 50%, 0 100%);
}
.hthumb,
.vthumb {
  flex: 1;
  height: 26px;
  border: 1px solid #96a2ae;
  border-radius: 2px;
  background: linear-gradient(#f4f8fc, #d4e2ec);
  display: grid;
  grid-template-columns: 2px 2px 2px;
  gap: 4px 3px;
  place-content: center;
}
.hthumb b,
.vthumb b {
  width: 2px;
  height: 2px;
  background: #98a4ae;
}

.vsplit {
  width: 12px;
  display: flex;
  flex-direction: column;
  justify-content: center;
  align-items: flex-start;
  gap: 2px;
  background: #e8eef6;
}
.right-pane {
  flex: 1;
  display: flex;
  flex-direction: column;
  padding-top: 14px;
}
.group {
  border: 1px solid #9ab3d0;
  border-radius: 5px 5px 0 0;
  background: #deeaf5;
}
.ghead {
  margin: 0;
  height: 29px;
  padding-left: 10px;
  font-size: 18px;
  font-weight: normal;
  line-height: 28px;
  background: linear-gradient(#cfe0ee, #bfd4e6);
  border-bottom: 1px solid #94afc8;
  border-radius: 4px 4px 0 0;
}
.gbody {
  padding: 8px 0 27px 10px;
  display: flex;
  flex-direction: column;
  gap: 4px;
}
.ident-group {
  width: 953px;
  height: 172px;
}
.line {
  display: flex;
  align-items: center;
  gap: 3px;
  height: 33px;
}
.lab {
  width: 167px;
  height: 33px;
  flex: none;
  padding-left: 3px;
  line-height: 35px;
  border-bottom: 1px solid #a9b9c6;
}
.lab.long {
  width: 300px;
}
.fld {
  height: 33px;
  flex: none;
  padding: 0 3px;
  border: 2px solid #a3a9b0;
  border-right-color: #b8bdc4;
  border-bottom-color: #b8bdc4;
  border-radius: 2px;
  background: #fff;
  font: 17px "DejaVu Sans Mono", monospace;
}
.fld:disabled {
  background: #dde8f1;
}
.w51 {
  width: 51px;
}
.focus {
  position: relative;
  width: 434px;
  height: 41px;
  margin: 0 6px 0 5px;
  padding: 4px 3px;
  background:
    linear-gradient(#d8202c, #d8202c) 0 0 / 9px 2px,
    linear-gradient(#d8202c, #d8202c) 0 0 / 2px 9px,
    linear-gradient(#d8202c, #d8202c) 100% 0 / 9px 2px,
    linear-gradient(#d8202c, #d8202c) 100% 0 / 2px 9px,
    linear-gradient(#d8202c, #d8202c) 0 100% / 9px 2px,
    linear-gradient(#d8202c, #d8202c) 0 100% / 2px 9px,
    linear-gradient(#d8202c, #d8202c) 100% 100% / 9px 2px,
    linear-gradient(#d8202c, #d8202c) 100% 100% / 2px 9px;
  background-repeat: no-repeat;
}
.focus input {
  display: block;
  width: 100%;
  height: 33px;
  border: 2px solid #a8a68e;
  border-radius: 2px;
  background: #ffeb9c;
}
.caret {
  position: absolute;
  left: 7px;
  top: 9px;
  width: 3px;
  height: 24px;
  background: #14184a;
}
.line .tall + .tall {
  margin-left: 9px;
}

.tabs {
  display: flex;
  height: 48px;
  padding: 17px 0 0 18px;
}
.tab {
  position: relative;
  height: 31px;
  border: 0;
  background: none;
  text-align: left;
  padding-left: 18px;
  white-space: nowrap;
}
.tab.active {
  padding-left: 30px;
}
.tab svg {
  position: absolute;
  inset: 0;
  width: 100%;
  height: 32px;
}
.tab span {
  position: relative;
  line-height: 36px;
}
.tabpanel {
  flex: 1;
  width: calc(100% - 60px);
  padding: 34px 0 0 9px;
  border: 1px solid #9ab3d0;
  border-bottom: 0;
  border-top: 6px solid #7d9fca;
  border-radius: 4px 4px 0 0;
  background: #deebf5;
  display: flex;
  flex-direction: column;
  gap: 15px;
}
.form {
  width: 880px;
  background: linear-gradient(90deg, #d6e6f2, #d5e4f4);
}
.frow {
  display: grid;
  grid-template-columns: 430px 241px 1fr;
  height: 33px;
}
.cell {
  display: flex;
  align-items: center;
  gap: 2px;
}
.cell-b {
  grid-column: 2;
}
.cell-b .lab {
  width: 168px;
}
.cell-c .lab {
  width: 116px;
}
.cell .lab {
  margin-right: -2px;
}
.slash {
  width: 18px;
  text-align: center;
  line-height: 33px;
}
.info .icon {
  width: 22px;
  height: 25px;
}
.check {
  display: flex;
  align-items: center;
  gap: 3px;
  line-height: 33px;
  white-space: nowrap;
}
.cell-a .check {
  margin-left: 13px;
}
.cell-c .check {
  margin-left: 2px;
}
.check input {
  appearance: none;
  width: 19px;
  height: 21px;
  border: 2px solid #9aa2aa;
  border-radius: 3px;
  background: #fff;
}
.check.dim {
  color: #949ea8;
}
.check.dim input {
  background: #dce8f2;
}
.pick {
  position: relative;
  display: block;
  flex: none;
}
.pick::after {
  content: "";
  position: absolute;
  right: 5px;
  top: 11px;
  width: 13px;
  height: 9px;
  background: #2c4270;
  clip-path: polygon(0 0, 100% 0, 50% 100%);
  pointer-events: none;
}
.command::after {
  right: 9px;
  top: 14px;
}
.pick select {
  appearance: none;
  display: block;
  width: 100%;
  height: 33px;
  padding: 0 20px 2px 5px;
  border: 2px solid #a3a9b0;
  border-radius: 2px;
  background: #fff;
}

.vscroll {
  width: 24px;
  display: flex;
  flex-direction: column;
  align-items: center;
  gap: 18px;
  padding: 9px 0 11px;
}
.up,
.dn {
  width: 13px;
  height: 9px;
  background: #525c68;
  clip-path: polygon(50% 0, 100% 100%, 0 100%);
}
.dn {
  clip-path: polygon(0 0, 100% 0, 50% 100%);
}
.vthumb {
  flex: none;
  width: 20px;
  height: 642px;
  margin: -4px 0 auto;
  background: linear-gradient(90deg, #f2f6fa, #d4e0ea);
}

.status {
  display: flex;
  align-items: center;
  justify-content: space-between;
  height: 48px;
  padding: 2px 26px 0 992px;
  border-bottom: 2px solid #b8bcc2;
}
.sap {
  width: 60px;
  height: 32px;
}
.saptext {
  font: bold 21px "Liberation Sans", sans-serif;
  fill: #fff;
}
.statusright {
  display: flex;
  align-items: center;
  line-height: 30px;
}
.statusright .sep {
  background: #d4d6da;
  margin: 0 9px 0 0;
}
.statusright .icon {
  margin-right: 5px;
}
.s1 {
  display: flex;
  align-items: center;
  gap: 8px;
  width: 83px;
}
.navy {
  width: 14px;
  height: 9px;
  background: #2c4270;
  clip-path: polygon(0 0, 100% 0, 50% 100%);
}
.s2 {
  width: 94px;
}
.s3 {
  width: 36px;
}
.s4 {
  width: 29px;
}
.s5 {
  width: 48px;
  padding-left: 8px;
}
.s6 {
  width: 25px;
}

.callout {
  position: absolute;
  left: 514px;
  top: 40px;
  width: 580px;
}
.callout svg {
  display: block;
  width: 580px;
}
.callout p {
  position: absolute;
  left: 0;
  top: 78px;
  width: 464px;
  margin: 0;
  font: 46px/61px Lato, "Noto Sans", sans-serif;
  font-variant-ligatures: none;
  color: #000;
  text-align: center;
}

.taskbar {
  position: relative;
  display: flex;
  align-items: center;
  height: 68px;
  margin-left: 4px;
  padding-left: 4px;
  border-top: 2px solid #1c3a58;
  box-shadow: inset 0 2px 0 #86b8dc;
  background: linear-gradient(90deg, #2c608e 0, #2f6ea6 60px, #3791c8 170px, #359ad2 600px, #3a94d0 900px, #2a80c4 1150px, #2068b2 1450px, #1d5ea8 1690px, #1c4a80 1800px, #1a3c6c 100%);
}
.swoosh {
  position: absolute;
  left: 900px;
  top: 0;
  width: 640px;
  height: 66px;
}
.task {
  position: relative;
  width: 94px;
  height: 66px;
  border: 0;
  background: none;
  display: grid;
  place-items: center;
  flex: none;
}
.task svg {
  width: 56px;
  height: 60px;
}
.task.orb {
  width: 72px;
  margin-right: 9px;
}
.task.box {
  border: 2px solid #24506e;
  border-radius: 4px;
  background: linear-gradient(135deg, #a4cce4, #5ca6d4);
  box-shadow: inset 0 0 0 1px #c8e4f4;
}
.task.w88 {
  width: 88px;
}
.task.bright {
  width: 76px;
  margin-left: 5px;
  background: linear-gradient(135deg, #e4f0f8, #b8d8ec);
}
.stack {
  width: 12px;
  height: 66px;
  margin-right: 5px;
  border: 2px solid #3a74a0;
  border-left: 0;
  border-radius: 0 4px 4px 0;
  background: #8cc0e0;
}
.ppt {
  font: bold 36px "Liberation Sans", sans-serif;
  fill: #d0451c;
}
.tray {
  position: relative;
  flex: 1;
  display: flex;
  align-items: center;
  justify-content: flex-end;
  gap: 12px;
  padding-right: 9px;
  color: #fff;
}
.tray svg {
  width: 24px;
  height: 26px;
}
.trayup {
  width: 12px;
  height: 8px;
  margin-right: 8px;
  background: #f0f4f8;
  clip-path: polygon(50% 0, 100% 100%, 0 100%);
}
.tray time {
  width: 92px;
  margin-left: 6px;
  padding-top: 2px;
  font: 17px/28px "Noto Sans", sans-serif;
  text-align: center;
}
.desk {
  width: 17px;
  height: 66px;
  border: 2px solid #7f97b4;
  border-right: 0;
  background: linear-gradient(#5a7698, #16345e 40%);
}
</style>
